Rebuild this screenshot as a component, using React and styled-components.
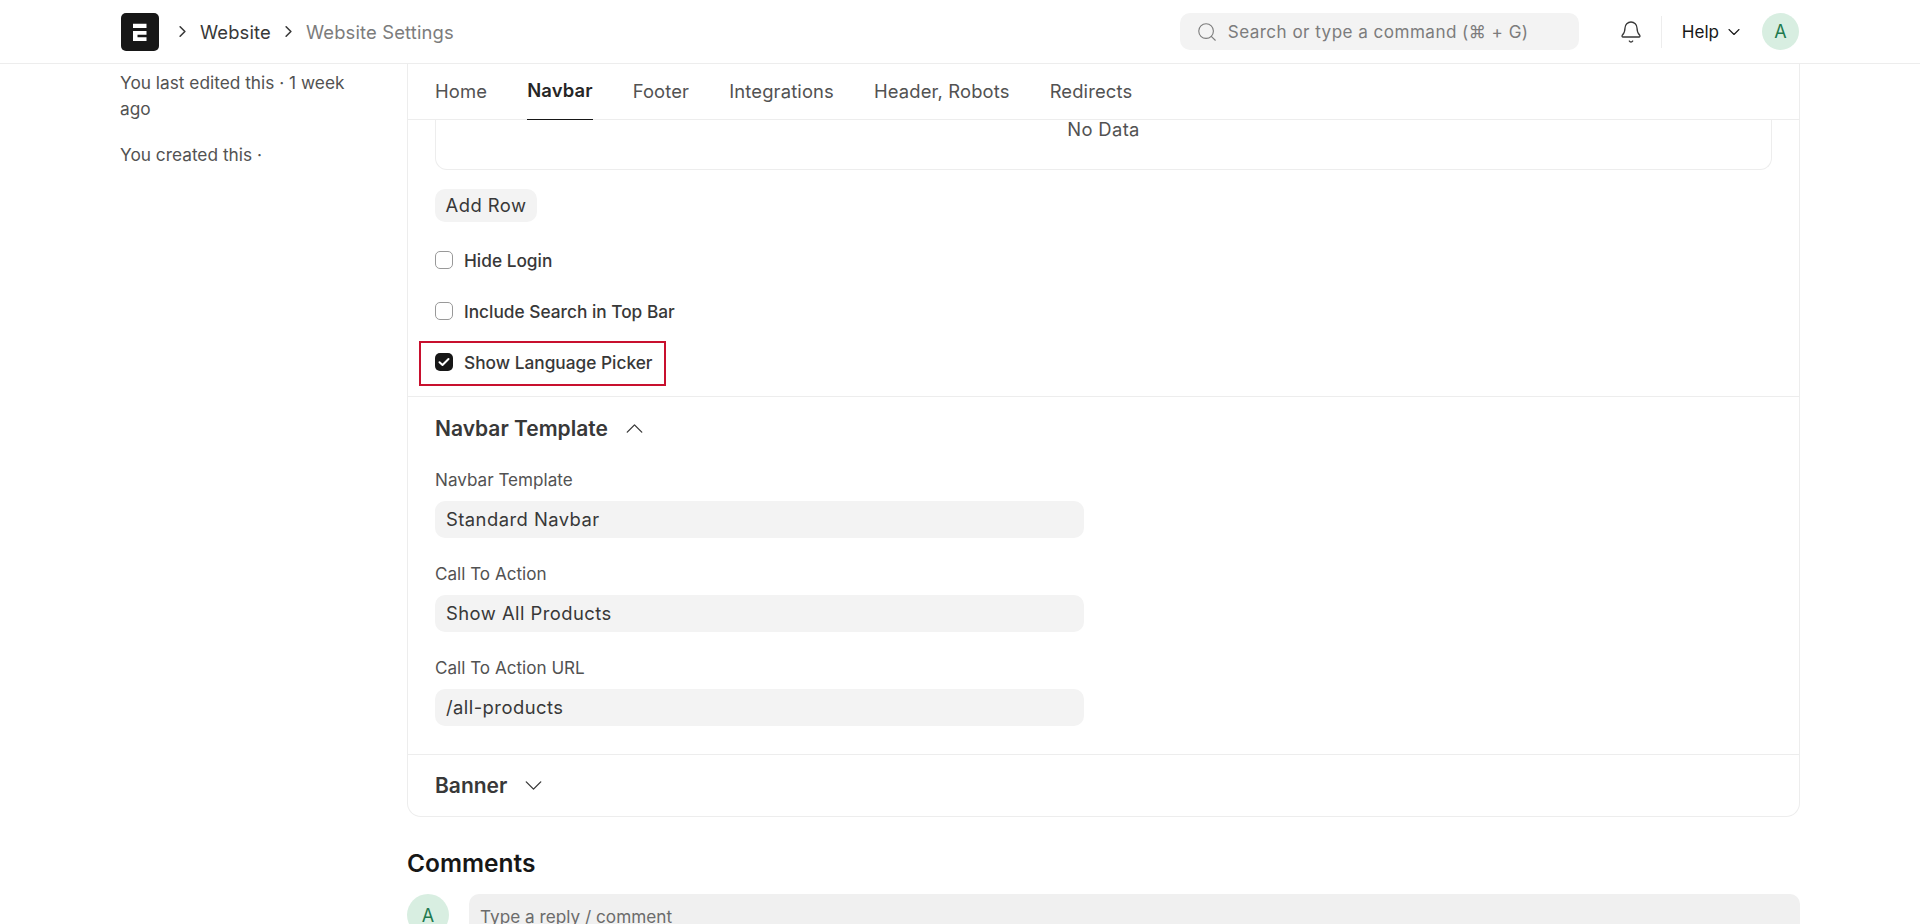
import React from 'react';
import styled, { createGlobalStyle } from 'styled-components';
import { Bell, ChevronDown, ChevronRight, ChevronUp, Search } from 'lucide-react';

const GlobalStyle = createGlobalStyle`
  html, body {
    margin: 0;
    height: 100%;
    overflow: hidden;
    background: #fff;
    font-family: Inter, "Liberation Sans", sans-serif;
    color: #383838;
  }
  * { box-sizing: border-box; }
`;

const Navbar = styled.header`
  height: 64px;
  padding: 0 121px;
  display: flex;
  align-items: center;
  border-bottom: 1px solid #ededed;
  background: #fff;
`;

const Logo = styled.svg`
  width: 38px;
  height: 38px;
  flex: none;
`;

const Crumbs = styled.nav`
  display: flex;
  align-items: center;
  margin-left: 14px;
  font-size: 18.4px;
  letter-spacing: 0.15px;
  flex: 1;
`;

const CrumbLink = styled.span`
  color: ${(p) => (p.$muted ? '#7c7c7c' : '#383838')};
  margin: 0 8px 0 8px;
`;

const SearchBox = styled.div`
  width: 399px;
  height: 37px;
  background: #f3f3f3;
  border-radius: 10px;
  display: flex;
  align-items: center;
  gap: 10px;
  padding-left: 16px;
  font-size: 17.1px;
  letter-spacing: 0.45px;
  color: #7c7c7c;
`;

const BellWrap = styled.div`
  display: flex;
  margin-left: 40px;
  color: #383838;
`;

const Divider = styled.div`
  width: 1px;
  height: 32px;
  background: #ededed;
  margin: 0 20px 0 18px;
`;

const HelpMenu = styled.div`
  display: flex;
  align-items: center;
  gap: 5px;
  font-size: 17.1px;
  color: #171717;
  margin-right: 18px;
`;

const Avatar = styled.div`
  width: ${(p) => p.$size}px;
  height: ${(p) => p.$size}px;
  flex: none;
  border-radius: 50%;
  background: #d8eee1;
  color: #1f7a4f;
  display: flex;
  align-items: center;
  justify-content: center;
  font-size: 18px;
`;

const Body = styled.div`
  display: grid;
  grid-template-columns: 287px 1393px;
  padding-left: 120px;
`;

const Sidebar = styled.aside`
  padding: 6px 40px 0 0;
  font-size: 17.3px;
  line-height: 26px;
  color: #525252;
`;

const SideNote = styled.p`
  margin: 0 0 20px;
`;

const Card = styled.section`
  border: 1px solid #ededed;
  border-top: none;
  border-radius: 0 0 14px 14px;
`;

const Tabs = styled.div`
  height: 56px;
  display: flex;
  gap: 40px;
  padding: 0 27px;
  border-bottom: 1px solid #ededed;
`;

const Tab = styled.div`
  height: 56px;
  padding-bottom: 3px;
  display: flex;
  align-items: center;
  font-size: 18.4px;
  letter-spacing: 0.15px;
  color: ${(p) => (p.$active ? '#262626' : '#525252')};
  font-weight: ${(p) => (p.$active ? 600 : 400)};
  border-bottom: ${(p) => (p.$active ? '1px solid #171717' : 'none')};
`;

const TableBox = styled.div`
  height: 50px;
  margin: 0 27px;
  border: 1px solid #ededed;
  border-top: none;
  border-radius: 0 0 12px 12px;
  display: flex;
  justify-content: center;
  font-size: 18.4px;
  letter-spacing: 0.02em;
  line-height: 19px;
  color: #525252;
`;

const AddRow = styled.button`
  display: block;
  height: 33px;
  width: 102px;
  margin: 19px 0 0 27px;
  padding: 0 0 2px;
  border: none;
  border-radius: 10px;
  background: #f3f3f3;
  font-family: inherit;
  font-size: 18.4px;
  letter-spacing: 0.025em;
  color: #383838;
`;

const CheckList = styled.div`
  display: flex;
  flex-direction: column;
  gap: 33px;
  margin: 29px 0 0 27px;
`;

const CheckRow = styled.label`
  position: relative;
  display: flex;
  align-items: center;
  gap: 11px;
  height: 18px;
  font-size: 17.3px;
  font-weight: 500;
  color: #383838;
`;

const Box = styled.span`
  width: 18px;
  height: 18px;
  flex: none;
  border-radius: 5px;
  border: ${(p) => (p.$checked ? 'none' : '1.5px solid #999')};
  background: ${(p) => (p.$checked ? '#171717' : '#fff')};
  display: flex;
  align-items: center;
  justify-content: center;
`;

const Highlight = styled.span`
  position: absolute;
  left: -16px;
  top: -12px;
  width: 247px;
  height: 45px;
  border: 2.5px solid #c8102e;
  pointer-events: none;
`;

const Section = styled.div`
  margin-top: ${(p) => p.$gap}px;
  border-top: 1px solid #ededed;
  padding: 0 27px;
`;

const SectionHead = styled.div`
  display: flex;
  align-items: center;
  gap: 12px;
  height: ${(p) => p.$height}px;
  font-size: 21px;
  font-weight: 600;
  color: #383838;
`;

const Fields = styled.div`
  display: flex;
  flex-direction: column;
  gap: 25px;
  padding: 10px 0 28px;
`;

const FieldLabel = styled.div`
  margin-bottom: 10px;
  font-size: 17.1px;
  line-height: 22px;
  color: #525252;
`;

const Input = styled.div`
  width: 649px;
  height: 37px;
  padding: 0 0 2px 11px;
  display: flex;
  align-items: center;
  background: #f3f3f3;
  border-radius: 10px;
  font-size: 18.4px;
  letter-spacing: 0.025em;
  color: #383838;
`;

const Comments = styled.div`
  margin-top: 31px;
`;

const CommentsTitle = styled.h2`
  margin: 0 0 16px;
  font-size: 24.5px;
  line-height: 30px;
  font-weight: 600;
  color: #171717;
`;

const CommentRow = styled.div`
  display: flex;
  gap: 20px;
`;

const CommentInput = styled.div`
  flex: 1;
  height: 120px;
  padding: 12px 11px;
  background: #f0f0f0;
  border-radius: 10px;
  font-size: 17.2px;
  line-height: 22px;
  color: #6b6b6b;
`;

const tabs = ['Home', 'Navbar', 'Footer', 'Integrations', 'Header, Robots', 'Redirects'];

const fields = [
  ['Navbar Template', 'Standard Navbar'],
  ['Call To Action', 'Show All Products'],
  ['Call To Action URL', '/all-products'],
];

const FrappeLogo = () => (
  <Logo viewBox="0 0 38 38">
    <rect width="38" height="38" rx="5" fill="#171717" />
    <path d="M12 10.7h13.5V15H12zM12 18h13.5v3.7h-9v2.6h9V28H12z" fill="#fff" />
  </Logo>
);

const Check = ({ label, checked }) => (
  <CheckRow>
    <Box $checked={checked}>
      {checked && (
        <svg width="12" height="10" viewBox="0 0 12 10">
          <path d="M1.5 5.2 4.5 8l6-6" fill="none" stroke="#fff" strokeWidth="2" strokeLinecap="round" strokeLinejoin="round" />
        </svg>
      )}
    </Box>
    {label}
    {checked && <Highlight />}
  </CheckRow>
);

export default function App() {
  return (
    <>
      <GlobalStyle />
      <Navbar>
        <FrappeLogo />
        <Crumbs>
          <ChevronRight size={19} strokeWidth={2} />
          <CrumbLink>Website</CrumbLink>
          <ChevronRight size={19} strokeWidth={2} />
          <CrumbLink $muted>Website Settings</CrumbLink>
        </Crumbs>
        <SearchBox>
          <Search size={22} strokeWidth={1.2} />
          Search or type a command (⌘ + G)
        </SearchBox>
        <BellWrap>
          <Bell size={24} strokeWidth={1.3} />
        </BellWrap>
        <Divider />
        <HelpMenu>
          Help
          <ChevronDown size={20} strokeWidth={1.3} />
        </HelpMenu>
        <Avatar $size={37}>A</Avatar>
      </Navbar>
      <Body>
        <Sidebar>
          <SideNote>You last edited this · 1 week ago</SideNote>
          <SideNote>You created this ·</SideNote>
        </Sidebar>
        <main>
          <Card>
            <Tabs>
              {tabs.map((t) => (
                <Tab key={t} $active={t === 'Navbar'}>{t}</Tab>
              ))}
            </Tabs>
            <TableBox>No Data</TableBox>
            <AddRow>Add Row</AddRow>
            <CheckList>
              <Check label="Hide Login" />
              <Check label="Include Search in Top Bar" />
              <Check label="Show Language Picker" checked />
            </CheckList>
            <Section $gap={25}>
              <SectionHead $height={62}>
                Navbar Template
                <ChevronUp size={29} strokeWidth={1.1} />
              </SectionHead>
              <Fields>
                {fields.map(([label, value]) => (
                  <div key={label}>
                    <FieldLabel>{label}</FieldLabel>
                    <Input>{value}</Input>
                  </div>
                ))}
              </Fields>
            </Section>
            <Section $gap={0}>
              <SectionHead $height={61}>
                Banner
                <ChevronDown size={29} strokeWidth={1.1} />
              </SectionHead>
            </Section>
          </Card>
          <Comments>
            <CommentsTitle>Comments</CommentsTitle>
            <CommentRow>
              <Avatar $size={42}>A</Avatar>
              <CommentInput>Type a reply / comment</CommentInput>
            </CommentRow>
          </Comments>
        </main>
      </Body>
    </>
  );
}
